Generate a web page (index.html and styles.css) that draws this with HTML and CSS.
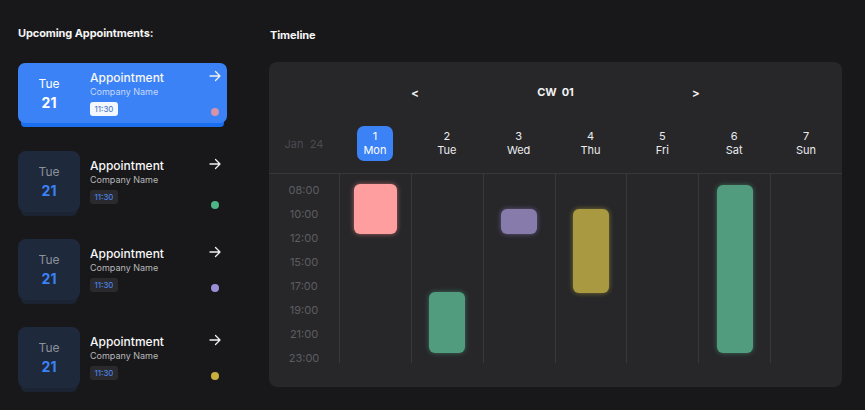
FILE: index.html
```html
<!DOCTYPE html>
<html lang="en">
<head>
<meta charset="utf-8">
<title>Appointments</title>
<link rel="stylesheet" href="styles.css">
</head>
<body>
<div class="page">
  <section class="left">
    <h2 class="title title-left">Upcoming Appointments:</h2>
    <div class="cards">
      <div class="card active">
        <div class="date"><span class="dow">Tue</span><span class="dom">21</span></div>
        <div class="info">
          <div class="name">Appointment</div>
          <div class="company">Company Name</div>
          <div class="time">11:30</div>
        </div>
        <div class="side">
          <svg class="arrow" viewBox="0 0 12 12" width="12" height="12"><path d="M1 6h10M6.5 1.5L11 6l-4.5 4.5" fill="none" stroke="currentColor" stroke-width="1.3" stroke-linecap="round" stroke-linejoin="round"/></svg>
          <span class="dot dot-pink"></span>
        </div>
      </div>
      <div class="card">
        <div class="date"><span class="dow">Tue</span><span class="dom">21</span></div>
        <div class="info">
          <div class="name">Appointment</div>
          <div class="company">Company Name</div>
          <div class="time">11:30</div>
        </div>
        <div class="side">
          <svg class="arrow" viewBox="0 0 12 12" width="12" height="12"><path d="M1 6h10M6.5 1.5L11 6l-4.5 4.5" fill="none" stroke="currentColor" stroke-width="1.3" stroke-linecap="round" stroke-linejoin="round"/></svg>
          <span class="dot dot-green dot-low"></span>
        </div>
      </div>
      <div class="card">
        <div class="date"><span class="dow">Tue</span><span class="dom">21</span></div>
        <div class="info">
          <div class="name">Appointment</div>
          <div class="company">Company Name</div>
          <div class="time">11:30</div>
        </div>
        <div class="side">
          <svg class="arrow" viewBox="0 0 12 12" width="12" height="12"><path d="M1 6h10M6.5 1.5L11 6l-4.5 4.5" fill="none" stroke="currentColor" stroke-width="1.3" stroke-linecap="round" stroke-linejoin="round"/></svg>
          <span class="dot dot-purple"></span>
        </div>
      </div>
      <div class="card">
        <div class="date"><span class="dow">Tue</span><span class="dom">21</span></div>
        <div class="info">
          <div class="name">Appointment</div>
          <div class="company">Company Name</div>
          <div class="time">11:30</div>
        </div>
        <div class="side">
          <svg class="arrow" viewBox="0 0 12 12" width="12" height="12"><path d="M1 6h10M6.5 1.5L11 6l-4.5 4.5" fill="none" stroke="currentColor" stroke-width="1.3" stroke-linecap="round" stroke-linejoin="round"/></svg>
          <span class="dot dot-yellow"></span>
        </div>
      </div>
    </div>
  </section>
  <section class="right">
    <h2 class="title title-right">Timeline</h2>
    <div class="panel">
      <div class="nav">
        <span class="nav-btn">&lt;</span>
        <span class="cw"><span>CW</span><span>01</span></span>
        <span class="nav-btn">&gt;</span>
      </div>
      <div class="head">
        <div class="month">Jan&nbsp; 24</div>
        <div class="day today"><span>1</span><span>Mon</span></div>
        <div class="day"><span>2</span><span>Tue</span></div>
        <div class="day"><span>3</span><span>Wed</span></div>
        <div class="day"><span>4</span><span>Thu</span></div>
        <div class="day"><span>5</span><span>Fri</span></div>
        <div class="day"><span>6</span><span>Sat</span></div>
        <div class="day"><span>7</span><span>Sun</span></div>
      </div>
      <div class="body">
        <div class="hours">
          <span>08:00</span><span>10:00</span><span>12:00</span><span>15:00</span>
          <span>17:00</span><span>19:00</span><span>21:00</span><span>23:00</span>
        </div>
        <div class="col"><div class="ev ev-pink" style="top:10px;height:50px;width:43px"></div></div>
        <div class="col"><div class="ev ev-green" style="top:118px;height:61px;width:36px"></div></div>
        <div class="col"><div class="ev ev-purple" style="top:35px;height:25px;width:36px"></div></div>
        <div class="col"><div class="ev ev-yellow" style="top:35px;height:84px;width:36px"></div></div>
        <div class="col"></div>
        <div class="col"><div class="ev ev-green" style="top:11px;height:168px;width:36px"></div></div>
        <div class="col"></div>
      </div>
    </div>
  </section>
</div>
</body>
</html>
```

FILE: styles.css
```css
* { box-sizing: border-box; }
html, body {
  margin: 0;
  padding: 0;
  background: #18181b;
  color: #f2f2f3;
  font-family: Inter, "Noto Sans", "Liberation Sans", sans-serif;
}
.page {
  display: flex;
  padding-left: 18px;
  gap: 42px;
  width: 865px;
  height: 410px;
  overflow: hidden;
}
.left { width: 209px; flex: none; }
.right { width: 573px; flex: none; }
.title {
  margin: 0;
  font-size: 11px;
  font-weight: 700;
  line-height: 16px;
  color: #f5f5f5;
}
.title-left { padding-top: 25px; letter-spacing: -0.1px; }
.title-right { padding-top: 27px; padding-left: 1px; letter-spacing: -0.1px; }

.cards {
  margin-top: 22px;
  display: flex;
  flex-direction: column;
  gap: 28px;
}
.card {
  height: 60px;
  display: flex;
  border-radius: 7px;
}
.card.active {
  background: #3b82f6;
  box-shadow: 0 7px 0 -3px #1a6ef0;
}
.date {
  width: 62px;
  flex: none;
  display: flex;
  flex-direction: column;
  align-items: center;
  padding-top: 12px;
  border-radius: 8px;
  background: #1e293b;
  box-shadow: 0 7px 0 -3px #1b2433;
}
.card .date { height: 61px; }
.card.active .date { background: transparent; box-shadow: none; height: 60px; }
.dow {
  font-size: 12px;
  line-height: 18px;
  color: #8b919b;
}
.dom {
  font-size: 14px;
  line-height: 19px;
  font-weight: 700;
  color: #3b82f6;
}
.active .dow, .active .dom { color: #fff; }
.info {
  flex: 1;
  padding-left: 10px;
  padding-top: 7px;
}
.name {
  font-size: 12px;
  line-height: 15px;
  font-weight: 500;
  color: #f7f7f7;
}
.company {
  font-size: 9px;
  line-height: 14px;
  color: #b7b7ba;
}
.active .company { color: #c5d8fb; }
.time {
  margin-top: 3px;
  width: 28px;
  height: 14px;
  border-radius: 3px;
  background: #2a2a2e;
  color: #4d8df5;
  font-size: 8px;
  line-height: 14px;
  text-align: center;
}
.active .time { background: #f4f7fd; color: #3b6fc4; }
.side {
  width: 24px;
  flex: none;
  display: flex;
  flex-direction: column;
  align-items: center;
  padding-top: 7px;
}
.arrow { color: #f2f2f2; display: block; }
.dot {
  margin-top: 26px;
  width: 8px;
  height: 8px;
  border-radius: 50%;
}
.dot-low { margin-top: 31px; }
.dot-pink { background: #d694a8; }
.dot-green { background: #4db585; }
.dot-purple { background: #9b8fd6; }
.dot-yellow { background: #c9b03c; }

.panel {
  margin-top: 19px;
  background: #27272a;
  border-radius: 8px;
  padding-top: 22px;
  padding-bottom: 24px;
}
.nav {
  display: flex;
  justify-content: center;
  align-items: center;
  gap: 118px;
  height: 16px;
  font-size: 11px;
  font-weight: 700;
  color: #f2f2f2;
}
.nav-btn { font-weight: 600; font-size: 12px; }
.cw { display: flex; gap: 5px; }
.head {
  margin-top: 26px;
  display: grid;
  grid-template-columns: 70px repeat(7, 1fr);
  align-items: start;
  padding-bottom: 12px;
  border-bottom: 1px solid #38383c;
}
.month {
  text-align: center;
  font-size: 11px;
  line-height: 16px;
  margin-top: 10px;
  color: #4b4b50;
}
.day {
  justify-self: center;
  width: 36px;
  height: 35px;
  padding: 4px 0;
  border-radius: 7px;
  display: flex;
  flex-direction: column;
  align-items: center;
  font-size: 11px;
  line-height: 13.5px;
  color: #ececee;
}
.day.today { background: #3b82f6; color: #fff; }
.body {
  display: grid;
  grid-template-columns: 70px repeat(7, 1fr);
  height: 189px;
}
.hours {
  display: flex;
  flex-direction: column;
  align-items: center;
  padding-top: 4px;
  font-size: 11px;
  line-height: 24px;
  color: #5d5d62;
  height: 189px;
}
.col {
  position: relative;
  border-left: 1px solid #38383c;
}
.ev {
  position: absolute;
  left: 0;
  right: 0;
  margin: 0 auto;
  border-radius: 6px;
}
.ev-pink { background: #ff9e9e; box-shadow: 0 0 5px rgba(255, 140, 140, 0.6); }
.ev-green { background: #519c7e; box-shadow: 0 0 5px rgba(82, 170, 130, 0.55); }
.ev-purple { background: #877bab; box-shadow: 0 0 5px rgba(150, 130, 200, 0.55); }
.ev-yellow { background: #a99a42; box-shadow: 0 0 5px rgba(200, 180, 60, 0.55); }
```
